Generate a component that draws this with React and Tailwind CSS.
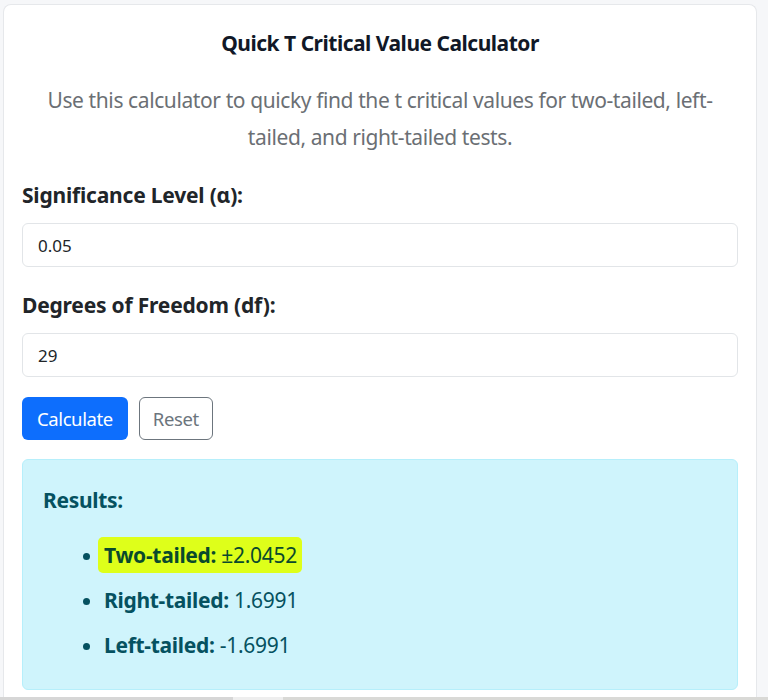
import React, { useState } from 'react';

const RESULTS = [
  { label: 'Two-tailed:', value: '±2.0452', marked: true },
  { label: 'Right-tailed:', value: '1.6991' },
  { label: 'Left-tailed:', value: '-1.6991' },
];

function Field({ label, value, onChange }) {
  return (
    <div className="flex flex-col">
      <label className="text-[21px] font-bold text-[#212529] leading-[28px] tracking-[-0.2px]">{label}</label>
      <input
        type="text"
        value={value}
        onChange={(e) => onChange(e.target.value)}
        className="mt-[14px] h-[44px] w-full rounded-[6px] border border-[#e2e5e8] bg-white px-[15px] text-[17px] text-[#212529] outline-none"
      />
    </div>
  );
}

export default function App() {
  const [alpha, setAlpha] = useState('0.05');
  const [df, setDf] = useState('29');

  return (
    <div
      className="flex h-[700px] flex-col overflow-hidden bg-[#f6f7f9]"
      style={{ fontFamily: '"Noto Sans", "Open Sans", sans-serif' }}
    >
      <div className="flex-1 overflow-hidden pl-[3px] pr-[11px] pt-[4px]">
        <div className="rounded-t-[8px] border border-b-0 border-[#e6e8eb] bg-white px-[18px] pt-[24px] pb-[20px]">
          <h2 className="text-center text-[21px] font-bold leading-[28px] tracking-[-0.5px] text-[#111827]">
            Quick T Critical Value Calculator
          </h2>
          <p className="mx-auto mt-[25px] max-w-[680px] text-center text-[21px] leading-[37px] tracking-[-0.4px] text-[#6b6f74]">
            Use this calculator to quicky find the t critical values for two-tailed, left-tailed, and right-tailed tests.
          </p>

          <div className="mt-[25px] flex flex-col gap-[24px]">
            <Field label="Significance Level (α):" value={alpha} onChange={setAlpha} />
            <Field label="Degrees of Freedom (df):" value={df} onChange={setDf} />
          </div>

          <div className="mt-[20px] flex gap-[11px]">
            <button type="button" className="h-[43px] rounded-[6px] bg-[#0d6efd] px-[15px] text-[18.5px] tracking-[-0.4px] text-white">
              Calculate
            </button>
            <button
              type="button"
              onClick={() => { setAlpha(''); setDf(''); }}
              className="h-[43px] rounded-[6px] border border-[#6c757d] bg-white px-[13px] text-[18.5px] tracking-[-0.4px] text-[#6c757d]"
            >
              Reset
            </button>
          </div>

          <div className="mt-[19px] rounded-[6px] border border-[#b6effb] bg-[#cff4fc] px-[20px] pt-[26px] pb-[29px] text-[#055160]">
            <h3 className="text-[21px] font-bold leading-[28px] tracking-[-0.3px]">Results:</h3>
            <ul className="mt-[27px] flex list-disc flex-col gap-[16px] pl-[61px] marker:text-[#055160]">
              {RESULTS.map((r) => (
                <li key={r.label} className="text-[21px] leading-[29px] tracking-[-0.3px]">
                  <span className={r.marked ? 'ml-[-6px] rounded-[5px] bg-[#deff1a] py-[4px] pl-[6px] pr-[5px] text-[#0a4a2c]' : ''}>
                    <strong className="font-bold">{r.label}</strong> {r.value}
                  </span>
                </li>
              ))}
            </ul>
          </div>
        </div>
      </div>
      <div className="flex h-[3px] shrink-0">
        <div className="w-[233px] bg-[#d6d6d6]" />
        <div className="w-[50px] bg-[#eeeeee]" />
        <div className="flex-1 bg-[#d9d9d6]" />
      </div>
    </div>
  );
}
